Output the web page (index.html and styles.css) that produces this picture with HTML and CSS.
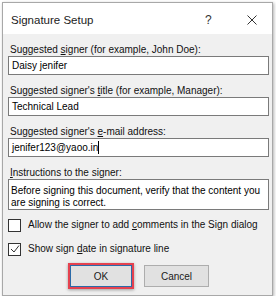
FILE: index.html
```html
<!DOCTYPE html>
<html lang="en">
<head>
    <meta charset="UTF-8">
    <title>Signature Setup</title>
    <link rel="stylesheet" href="styles.css">
</head>
<body>

<div class="dialog">
    <div class="title-bar">
        <span class="title">Signature Setup</span>
        <span class="title-help">?</span>
        <span class="title-close">
            <svg width="10" height="10" viewBox="0 0 10 10">
                <path d="M0.5 0.5 L9.5 9.5 M9.5 0.5 L0.5 9.5" stroke="#333" stroke-width="1" fill="none"/>
            </svg>
        </span>
    </div>

    <div class="dialog-body">
        <div class="field-label">Suggested <u>s</u>igner (for example, John Doe):</div>
        <div class="text-input">Daisy jenifer</div>

        <div class="field-label">Suggested signer's <u>t</u>itle (for example, Manager):</div>
        <div class="text-input">Technical Lead</div>

        <div class="field-label">Suggested signer's <u>e</u>-mail address:</div>
        <div class="text-input">jenifer123@yaoo.in<span class="caret"></span></div>

        <div class="field-label"><u>I</u>nstructions to the signer:</div>
        <div class="text-area">Before signing this document, verify that the content you are signing is correct.</div>

        <div class="check-row first">
            <span class="check-box"></span>
            <span>Allow the signer to add <u>c</u>omments in the Sign dialog</span>
        </div>
        <div class="check-row">
            <span class="check-box">
                <svg width="10" height="10" viewBox="0 0 10 10">
                    <path d="M1 5 L4 8 L9 1.5" stroke="#333" stroke-width="1" fill="none"/>
                </svg>
            </span>
            <span>Show sign <u>d</u>ate in signature line</span>
        </div>

        <div class="button-row">
            <div class="ok-highlight">
                <button class="dialog-button default">OK</button>
            </div>
            <button class="dialog-button">Cancel</button>
        </div>
    </div>
</div>

</body>
</html>
```

FILE: styles.css
```css
body {
    margin: 0;
    background: #ffffff;
    font-family: "Liberation Sans", Arial, sans-serif;
    font-size: 10px;
    color: #111;
}

.dialog {
    margin: 2px 0 0 2px;
    width: 269px;
    height: 292px;
    border: 1px solid #a8a8a8;
    background: #f0f0f0;
    box-shadow: 1px 1px 3px rgba(0, 0, 0, 0.3);
}

.title-bar {
    height: 31px;
    box-sizing: border-box;
    padding: 3px 0 0 8px;
    background: #ffffff;
    display: flex;
    align-items: center;
}

.title {
    flex: 1;
    font-size: 11.5px;
    color: #222;
}

.title-help {
    width: 42px;
    font-size: 12px;
    color: #333;
}

.title-close {
    width: 25px;
    display: flex;
}

.dialog-body {
    padding: 0 3px 0 5px;
}

.field-label {
    margin-top: 7px;
    padding: 2px 0 0 2px;
    line-height: 13px;
}

.text-input,
.text-area {
    background: #ffffff;
    border: 1px solid #7a7a7a;
    padding: 0 3px;
    line-height: 17px;
    height: 17px;
    color: #000;
}

.text-area {
    box-sizing: border-box;
    height: 31px;
    padding: 5px 2px 0;
    line-height: 12px;
}

.caret {
    display: inline-block;
    width: 1px;
    height: 13px;
    background: #000;
    vertical-align: -3px;
}

.check-row {
    display: flex;
    align-items: center;
    gap: 7px;
    margin-top: 10px;
    line-height: 14px;
}

.check-row.first {
    margin-top: 8px;
}

.check-box {
    width: 11px;
    height: 11px;
    border: 1px solid #333;
    background: #ffffff;
    display: flex;
    align-items: center;
    justify-content: center;
}

.button-row {
    display: flex;
    justify-content: center;
    align-items: center;
    gap: 10px;
    margin-top: 7px;
}

.ok-highlight {
    display: flex;
    border: 2px solid #e5424f;
    box-shadow: 0 1px 3px rgba(0, 0, 0, 0.35);
}

.dialog-button {
    width: 65px;
    height: 22px;
    background: #e1e1e1;
    border: 1px solid #adadad;
    font-family: inherit;
    font-size: 10px;
    color: #1a1a1a;
    padding: 0;
}

.dialog-button.default {
    width: 62px;
    border: 1px solid #2b6aa8;
}
```
